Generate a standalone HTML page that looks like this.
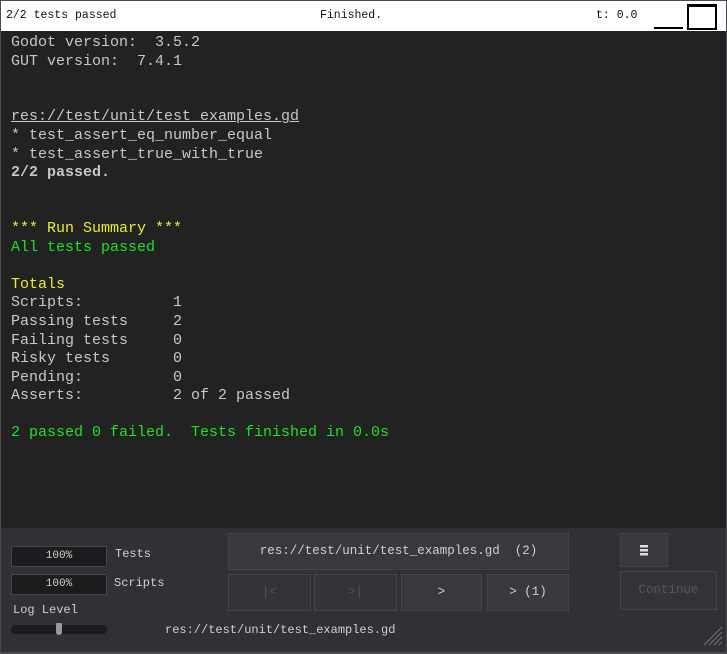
<!DOCTYPE html>
<html><head><meta charset="utf-8"><style>
*{margin:0;padding:0;box-sizing:border-box}
body{width:727px;height:654px;background:#4a4a4e;position:relative;overflow:hidden;font-family:"Liberation Mono",monospace}
#top{position:absolute;left:1px;top:1px;width:725px;height:30px;background:#fff;color:#111;font-size:11.5px}
#top span{position:absolute;top:8px}
#log{position:absolute;left:1px;top:31px;width:725px;height:497px;background:#222222;color:#c8c8c8;font-size:15px;line-height:18.6px;padding:3px 0 0 10px;white-space:pre}
.y{color:#ecec2a}.g{color:#1fe01f}.b{font-weight:bold}.u{text-decoration:underline}
#bot{position:absolute;left:1px;top:528px;width:725px;height:124px;background:#303035;color:#d0d0d0;font-size:12px}
.bar{position:absolute;width:96px;height:21px;background:#1c1c1e;border:1px solid #454548;text-align:center;line-height:19px;font-size:11px}
.btn{position:absolute;background:#38383e;border:1px solid #44444a;text-align:center;font-size:12.5px;white-space:pre}
.dis{color:#55555a;background:#333338}
.l{position:absolute}
</style></head><body>
<div id="top"><span style="left:5px">2/2 tests passed</span><span style="left:319px">Finished.</span><span style="left:595px">t: 0.0</span>
<div style="position:absolute;left:653px;top:26px;width:29px;height:2px;background:#000"></div>
<div style="position:absolute;left:686px;top:3px;width:30px;height:26px;border:2px solid #000;border-top-width:3px"></div></div>
<div id="log">Godot version:  3.5.2
GUT version:  7.4.1


<span class="u">res://test/unit/test_examples.gd</span>
* test_assert_eq_number_equal
* test_assert_true_with_true
<span class="b">2/2 passed.</span>


<span class="y">*** Run Summary ***</span>
<span class="g">All tests passed</span>

<span class="y">Totals</span>
Scripts:          1
Passing tests     2
Failing tests     0
Risky tests       0
Pending:          0
Asserts:          2 of 2 passed

<span class="g">2 passed 0 failed.  Tests finished in 0.0s</span></div>
<div id="bot">
<div class="bar" style="left:10px;top:18px">100%</div><div class="l" style="left:114px;top:19px">Tests</div>
<div class="bar" style="left:10px;top:46px">100%</div><div class="l" style="left:113px;top:48px">Scripts</div>
<div class="l" style="left:12px;top:75px">Log Level</div>
<div style="position:absolute;left:10px;top:97px;width:96px;height:9px;background:#1c1c1e;border-radius:5px"></div>
<div style="position:absolute;left:55px;top:95px;width:6px;height:12px;background:#999;border-radius:1px 1px 4px 4px"></div>
<div class="l" style="left:164px;top:95px">res://test/unit/test_examples.gd</div>
<div class="btn" style="left:227px;top:5px;width:341px;height:37px;line-height:35px">res://test/unit/test_examples.gd  (2)</div>
<div class="btn dis" style="left:227px;top:46px;width:83px;height:37px;line-height:35px">|&lt;</div>
<div class="btn dis" style="left:313px;top:46px;width:83px;height:37px;line-height:35px">&gt;|</div>
<div class="btn" style="left:400px;top:46px;width:81px;height:37px;line-height:35px">&gt;</div>
<div class="btn" style="left:486px;top:46px;width:82px;height:37px;line-height:35px">&gt; (1)</div>
<div class="btn" style="left:619px;top:5px;width:48px;height:34px"><svg style="position:absolute;left:19px;top:11px" width="8" height="11"><rect y="0" width="8" height="2.5" fill="#ddd"/><rect y="4" width="8" height="2.5" fill="#ddd"/><rect y="8" width="8" height="2.5" fill="#ddd"/></svg></div>
<div class="btn dis" style="left:619px;top:43px;width:97px;height:39px;line-height:37px">Continue</div>
<svg style="position:absolute;left:700px;top:96px" width="22" height="22"><g stroke="#777" stroke-width="1"><line x1="21" y1="3" x2="3" y2="21"/><line x1="21" y1="8" x2="8" y2="21"/><line x1="21" y1="13" x2="13" y2="21"/><line x1="21" y1="18" x2="18" y2="21"/></g></svg>
</div>
</body></html>
